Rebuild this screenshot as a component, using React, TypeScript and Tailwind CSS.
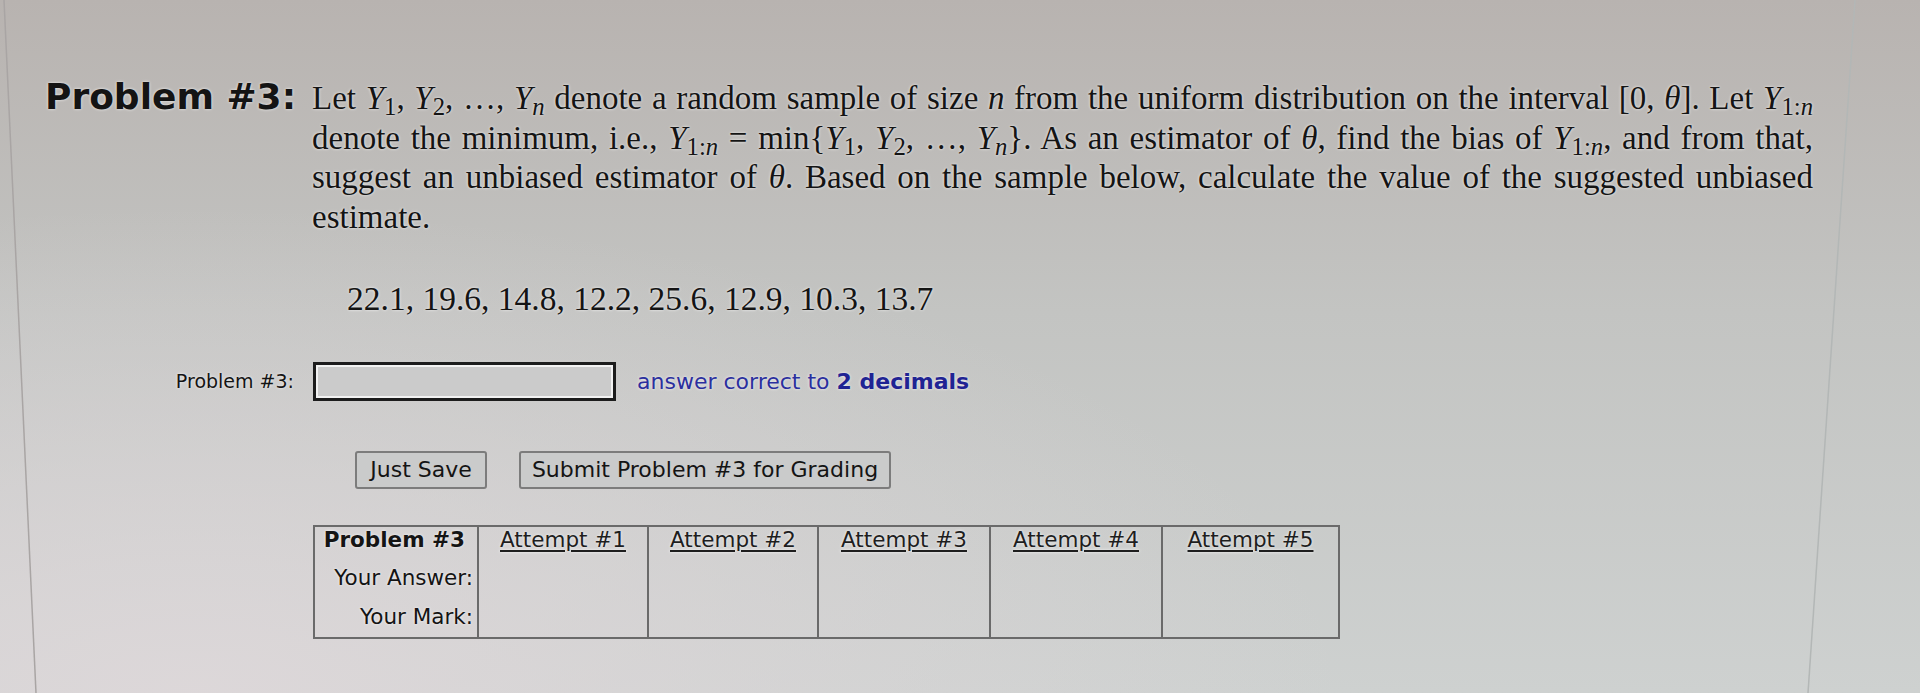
import React from "react";

const serif = "font-['Liberation_Serif','Times_New_Roman',serif]";
const sans = "font-['DejaVu_Sans','Verdana',sans-serif]";
const glow = "[text-shadow:0_0_3px_rgba(255,255,255,0.85)]";

function I({ children }: { children: React.ReactNode }) {
  return <i className="italic">{children}</i>;
}

function Y({ sub }: { sub: React.ReactNode }) {
  return (
    <span className="whitespace-nowrap">
      <I>Y</I>
      <sub>{sub}</sub>
    </span>
  );
}

const oneN = (
  <>
    1:<I>n</I>
  </>
);

const lineCls = "h-[39.5px] leading-[39.5px] text-justify [text-align-last:justify] whitespace-nowrap";

const ATTEMPTS = [
  { label: "Attempt #1", w: "w-[170px]" },
  { label: "Attempt #2", w: "w-[170px]" },
  { label: "Attempt #3", w: "w-[172px]" },
  { label: "Attempt #4", w: "w-[172px]" },
  { label: "Attempt #5", w: "w-[175px]" },
];

export default function App() {
  return (
    <div className="relative w-[1920px] h-[693px] overflow-hidden bg-[radial-gradient(ellipse_60%_70%_at_10%_100%,rgba(222,216,218,0.9),rgba(222,216,218,0)),linear-gradient(180deg,#b8b3b0_0%,#c3c4c2_45%,#ced1d0_100%)] text-[#141414]">
      {/* screen edges seen in the photo */}
      <svg className="absolute inset-0 pointer-events-none" width="1920" height="693">
        <line x1="4" y1="0" x2="36" y2="693" stroke="#a9a5a4" strokeWidth="1.5" />
        <line x1="1855" y1="0" x2="1808" y2="693" stroke="#b3b7b6" strokeWidth="1.5" />
      </svg>

      <div className={`pl-[45px] pt-[77px] ${glow}`}>
        {/* question */}
        <div className="flex items-baseline">
          <h2 className={`${sans} w-[267px] shrink-0 text-[36px] font-bold leading-[39.5px]`}>Problem #3:</h2>
          <div className={`${serif} w-[1501px] text-[33px]`}>
            <div className={lineCls}>
              Let <Y sub="1" />, <Y sub="2" />, …, <Y sub={<I>n</I>} /> denote a random sample of size <I>n</I> from the
              uniform distribution on the interval [0, <I>θ</I>]. Let <Y sub={oneN} />
            </div>
            <div className={lineCls}>
              denote the minimum, i.e., <Y sub={oneN} /> = min{"{"}
              <Y sub="1" />, <Y sub="2" />, …, <Y sub={<I>n</I>} />
              {"}"}. As an estimator of <I>θ</I>, find the bias of <Y sub={oneN} />, and from that,
            </div>
            <div className={lineCls}>
              suggest an unbiased estimator of <I>θ</I>. Based on the sample below, calculate the value of the suggested
              unbiased
            </div>
            <div className="h-[39.5px] leading-[39.5px]">estimate.</div>
          </div>
        </div>

        {/* sample */}
        <div className={`${serif} mt-[42px] pl-[302px] text-[33.5px] leading-[39.5px]`}>
          22.1, 19.6, 14.8, 12.2, 25.6, 12.9, 10.3, 13.7
        </div>

        {/* answer row */}
        <div className={`${sans} mt-[43px] flex items-center`}>
          <label className="w-[249px] shrink-0 text-right text-[19px]">Problem #3:</label>
          <div className="ml-[19px] h-[39px] w-[303px] border-[3px] border-[#1c1c1c] bg-[#cbcbcb] shadow-[inset_0_0_0_2px_#f2f2f2]" />
          <span className="ml-[21px] text-[22px] text-[#2b2f9e]">
            answer correct to <b className="font-bold text-[#1f2393]">2 decimals</b>
          </span>
        </div>

        {/* buttons */}
        <div className={`${sans} mt-[50px] ml-[310px] flex gap-[32px] text-[22px]`}>
          <button className="h-[38px] w-[132px] rounded-[3px] border-2 border-[#7c7c7c] bg-[#cacbcb] leading-none">
            Just Save
          </button>
          <button className="h-[38px] w-[372px] rounded-[3px] border-2 border-[#7c7c7c] bg-[#cacbcb] leading-none">
            Submit Problem #3 for Grading
          </button>
        </div>

        {/* attempts */}
        <div className={`${sans} mt-[36px] ml-[268px] flex w-fit border-2 border-[#6a6a6a] text-[21.5px]`}>
          <div className="flex h-[110px] w-[164px] flex-col gap-[16.5px] border-r-2 border-[#6a6a6a] pr-[4px] pt-[2px] text-right leading-[22px]">
            <span className="pr-[8px] font-bold">Problem #3</span>
            <span>Your Answer:</span>
            <span>Your Mark:</span>
          </div>
          {ATTEMPTS.map((a, i) => (
            <div
              key={a.label}
              className={`${a.w} h-[110px] pt-[2px] text-center leading-[22px] ${i < ATTEMPTS.length - 1 ? "border-r-2 border-[#6a6a6a]" : ""}`}
            >
              <a className="text-[#1e1e1e] underline underline-offset-[3px]">{a.label}</a>
            </div>
          ))}
        </div>
      </div>
    </div>
  );
}
